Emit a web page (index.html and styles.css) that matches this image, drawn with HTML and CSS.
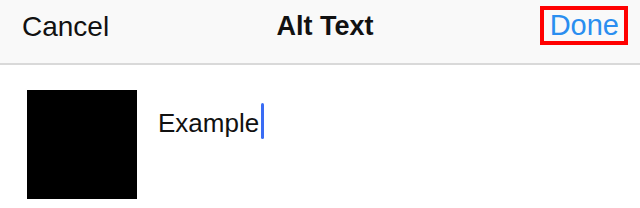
FILE: index.html
```html
<!DOCTYPE html>
<html lang="en">
<head>
	<meta charset="UTF-8">
	<title>Alt Text</title>
	<link rel="stylesheet" href="styles.css">
</head>
<body>
	<!-- 顶部导航 -->
	<div class="nav_bar">
		<div class="nav_cancel">Cancel</div>
		<div class="nav_title">Alt Text</div>
		<div class="nav_right">
			<div class="nav_done">Done</div>
		</div>
	</div>
	<!-- 内容 -->
	<div class="content">
		<div class="thumb"></div>
		<div class="alt_input">
			<span class="alt_value">Example</span>
			<span class="caret"></span>
		</div>
	</div>
</body>
</html>
```

FILE: styles.css
```css
	body{
		margin:0;
		background:#fff;
		font-family:"Liberation Sans", Arial, sans-serif;
		color:#111;
	}
	.nav_bar{
		display:grid;
		grid-template-columns:1fr auto 1fr;
		align-items:start;
		height:65px;
		padding:6px 12px 0 22px;
		box-sizing:border-box;
		background:#f9f9f9;
		border-bottom:2px solid #d9d9d9;
	}
	.nav_cancel{
		font-size:28px;
		line-height:31px;
		padding-top:5px;
	}
	.nav_title{
		font-size:27px;
		font-weight:bold;
		line-height:31px;
		padding-top:5px;
	}
	.nav_right{
		display:flex;
		justify-content:flex-end;
	}
	.nav_done{
		font-size:29px;
		line-height:31px;
		color:#2a8ef0;
		border:4px solid #f00;
		padding:0 5px 0 6px;
	}
	.content{
		display:flex;
		align-items:flex-start;
		padding:25px 0 0 27px;
	}
	.thumb{
		width:110px;
		height:109px;
		background:#000;
	}
	.alt_input{
		display:flex;
		align-items:flex-start;
		margin:13px 0 0 21px;
	}
	.alt_value{
		font-size:26px;
		line-height:36px;
		padding-top:2px;
	}
	.caret{
		width:3px;
		height:36px;
		margin-left:2px;
		border-radius:2px;
		background:#3a6cf4;
	}
```
